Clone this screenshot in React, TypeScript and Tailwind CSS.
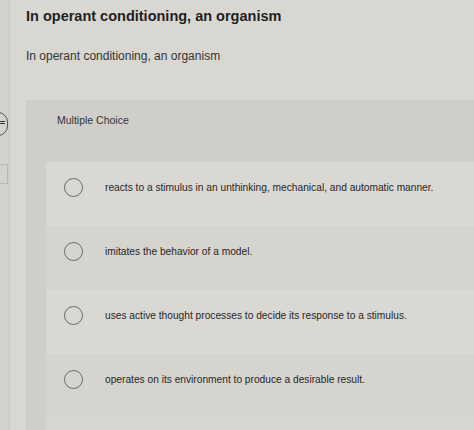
const options = [
  'reacts to a stimulus in an unthinking, mechanical, and automatic manner.',
  'imitates the behavior of a model.',
  'uses active thought processes to decide its response to a stimulus.',
  'operates on its environment to produce a desirable result.',
]

export default function App() {
  return (
    <div
      className="w-[474px] h-[430px] overflow-hidden flex bg-[#d9d7d2] text-[#2a2a2a]"
      style={{ fontFamily: '"Liberation Sans", Arial, sans-serif' }}
    >
      <div className="w-[10px] shrink-0 flex flex-col border-r border-[#c9c7c2] bg-[#d4d2cd]">
        <div className="mt-[112px] -ml-[12px] w-[20px] h-[24px] rounded-full border-[1.5px] border-[#555] flex items-center justify-end pr-[2px] text-[9px] font-bold">
          =
        </div>
        <div className="mt-[28px] w-[8px] h-[20px] border border-[#b9b7b2] border-l-0" />
      </div>

      <div className="flex-1 flex flex-col pl-[16px]">
        <h1 className="mt-[6px] text-[14.5px] leading-[20px] font-bold text-[#1f1f1f]">
          In operant conditioning, an organism
        </h1>
        <p className="mt-[22px] text-[12px] leading-[16px] text-[#333]">In operant conditioning, an organism</p>

        <div className="mt-[36px] flex-1 bg-[#d0cec9] flex flex-col">
          <div className="pl-[31px] pt-[13px] h-[62px] text-[10.5px] text-[#333]">Multiple Choice</div>
          <div className="ml-[20px] flex-1 bg-[#d8d6d1] flex flex-col">
            {options.map((o, i) => (
              <div
                key={i}
                className={
                  'h-[64px] flex items-start pt-[16px] ' + (i % 2 === 0 ? 'bg-[#dad8d3]' : 'bg-[#d6d4cf]')
                }
              >
                <span className="ml-[18px] w-[19px] h-[19px] shrink-0 rounded-full border-[1.5px] border-[#6a6a6a]" />
                <span className="ml-[22px] mt-[3px] text-[10.2px] leading-[14px] text-[#262626]">{o}</span>
              </div>
            ))}
          </div>
        </div>
      </div>
    </div>
  )
}
